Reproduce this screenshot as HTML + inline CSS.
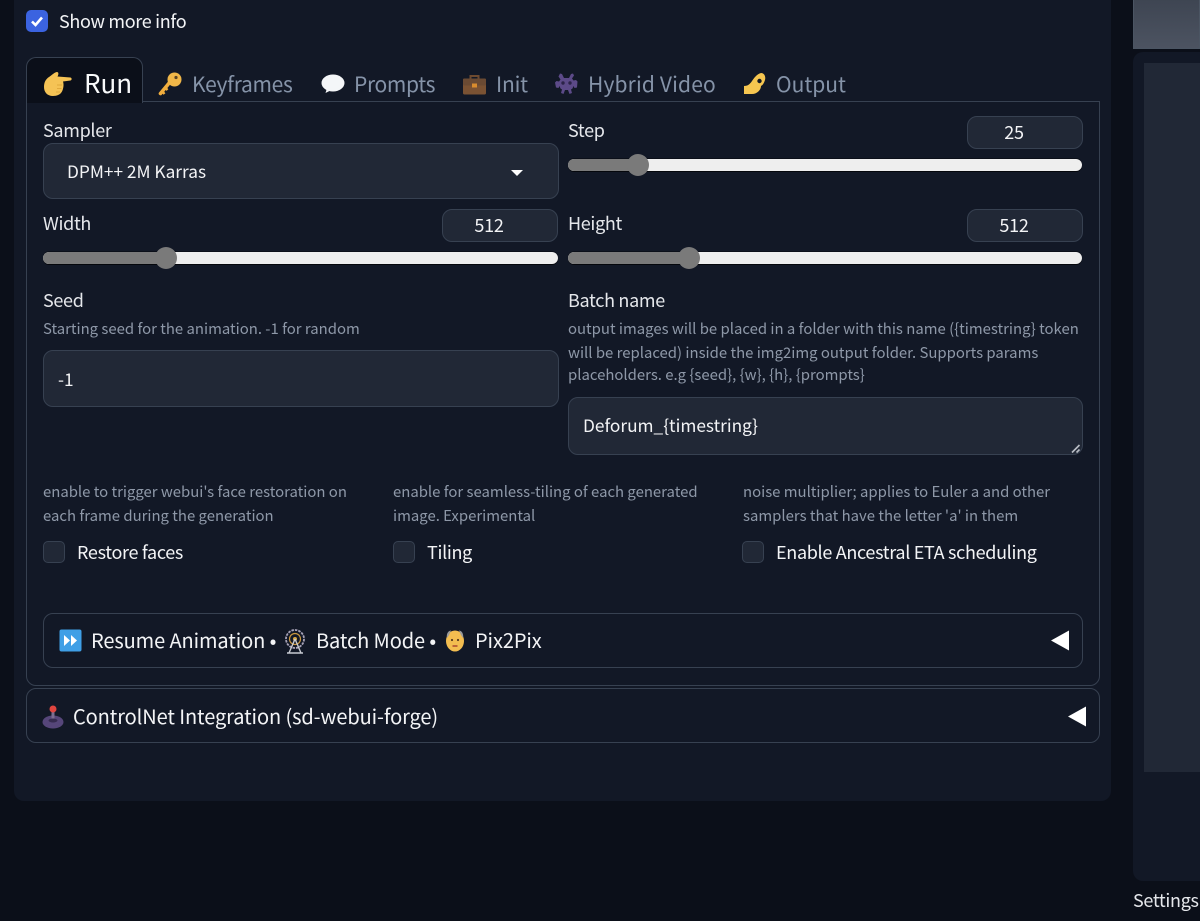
<!DOCTYPE html>
<html><head><meta charset="utf-8"><style>
*{box-sizing:border-box}
html,body{margin:0;padding:0;width:1200px;height:921px;overflow:hidden;background:#0b0f19}
body{position:relative;font-family:"Noto Sans CJK JP","Liberation Sans",sans-serif;color:#e5e7eb}
.a{position:absolute}
.t{position:absolute;white-space:nowrap;line-height:24px;font-size:18px;letter-spacing:-.32px;color:#f3f4f6}
.l{font-size:18px;color:#e5e7eb}
.i{font-size:14.9px;letter-spacing:0;color:#8e98a8;margin-top:1px}
.tab{font-size:21px;letter-spacing:0;color:#8593a8}
.m{font-size:17.3px;letter-spacing:0}
.h{font-size:20px;letter-spacing:-.1px}
.box{position:absolute;background:#212836;border:1px solid #374151;border-radius:10px}
.num{position:absolute;width:116px;height:33px;background:#212836;border:1px solid #374151;border-radius:10px;padding-right:22px;text-align:center;font-size:18px;line-height:30px;letter-spacing:-.2px;color:#f3f4f6}
.sl{position:absolute;height:12px;background:#eee;border-radius:6px;box-shadow:0 1px 0 #05070c,0 -1px 0 #0b0f19}
.sl b{position:absolute;left:0;top:0;height:12px;background:#7a7a7a;border-radius:6px 0 0 6px}
.sl i{position:absolute;top:-5px;width:22px;height:22px;border-radius:50%;background:#7a7a7a}
.cb{position:absolute;width:22px;height:22px;background:#212836;border:1px solid #374151;border-radius:5px}
svg{position:absolute;overflow:visible}
</style></head><body>
<div class="a" style="left:14px;top:-10px;width:1097px;height:811px;background:#121826;border-radius:10px"></div>

<div class="a" style="left:26px;top:10px;width:22px;height:22px;background:#3b63e0;border-radius:5px"></div>
<svg style="left:26px;top:10px" width="22" height="22"><path d="M6 11.500l3.500 3.500L16 7.500" fill="none" stroke="#fff" stroke-width="2.600"/></svg>
<div class="t" style="left:59px;top:9px">Show more info</div>

<!-- tabs -->
<div class="a" style="left:26px;top:101px;width:1074px;height:585px;border:1px solid #374151;border-radius:0 0 10px 10px"></div>
<div class="a" style="left:26px;top:57px;width:117px;height:46px;background:#0b0f19;border:1px solid #374151;border-bottom:none;border-radius:10px 10px 0 0"></div>
<svg style="left:43px;top:71px" width="29" height="26" viewBox="0 0 29 26"><path d="M1 16c0-5 2-8 5-10 3-2 6-5 8-5 1.500 0 2 2 .5 4.500l13 1c1.500.5 1.500 2.500 0 3L20 10.500c1 3 .5 7-1 10-1.500 3-5 4.500-9 4.500C4 25 1 21 1 16z" fill="#f5c355"/><path d="M14 14h5M14 17.500h4.500M13 21h4" stroke="#e0a83c" stroke-width="1"/></svg>
<div class="t" style="left:84px;top:70px;font-size:26px;line-height:26px;letter-spacing:0;color:#f9fafb">Run</div>

<svg style="left:159px;top:72px" width="23" height="24" viewBox="0 0 23 24"><path d="M1.500 21.500L11 10" stroke="#f0ad3d" stroke-width="3.600" stroke-linecap="round"/><path d="M3 19l2.500 3M6 15.500l2.500 2.500" stroke="#f0ad3d" stroke-width="2.500"/><circle cx="15.500" cy="7.500" r="7" fill="#f0b648"/><circle cx="17" cy="5.500" r="1.600" fill="#5b4325"/></svg>
<div class="t tab" style="left:192px;top:72px;letter-spacing:-.3px">Keyframes</div>

<svg style="left:321px;top:73px" width="24" height="22" viewBox="0 0 24 22"><ellipse cx="12" cy="10" rx="11.500" ry="8.500" fill="#f4f6f8"/><path d="M6 15l-1.500 5 6-3z" fill="#f4f6f8"/></svg>
<div class="t tab" style="left:354px;top:72px;letter-spacing:-.35px">Prompts</div>

<svg style="left:463px;top:74px" width="23" height="21" viewBox="0 0 23 21"><path d="M7.500 5V2h8v3" fill="none" stroke="#6d4a30" stroke-width="2"/><rect x="0" y="4.500" width="23" height="16" rx="1.500" fill="#7a5233"/><rect x="0" y="4.500" width="23" height="7" rx="1.500" fill="#6a4a33"/><rect x="9" y="9.500" width="5" height="4" fill="#d98c2e"/></svg>
<div class="t tab" style="left:496px;top:72px;letter-spacing:-.2px">Init</div>

<svg style="left:555px;top:73px" width="23" height="22" viewBox="0 0 23 22"><path d="M5 .5l2 .5 2 4h5l2-4 2-.5 1 2-2 3 1.500 2 2.500-.5 1.500 1.500-.5 6-2.500.5-1-2-1 2.500-1.500 1 1 3.500-2.500 1-1.500-4h-3l-1.500 4-2.500-1 1-3.500-1.500-1-1-2.500-1 2-2.500-.5L0 9.500 1.500 8 4 8.500l1.500-2-2-3z" fill="#5c4a88"/><circle cx="8" cy="10" r="1.700" fill="#2b2348"/><circle cx="15" cy="10" r="1.700" fill="#2b2348"/></svg>
<div class="t tab" style="left:588px;top:72px;letter-spacing:.15px">Hybrid Video</div>

<svg style="left:743px;top:72px" width="23" height="24" viewBox="0 0 23 24"><path d="M1 22V14c4 0 6-2 8-5 2-3 5-7 9-8 3 0 5 3 4 7-1 3-2 5-4 6 0 4-4 8-9 8z" fill="#f6c650"/><circle cx="16.500" cy="9" r="2.200" fill="#121826"/></svg>
<div class="t tab" style="left:776px;top:72px">Output</div>

<!-- row 1 -->
<div class="t l" style="left:43px;top:118px">Sampler</div>
<div class="box" style="left:43px;top:143px;width:516px;height:56px"></div>
<div class="t m" style="left:67px;top:159px;color:#f3f4f6">DPM++ 2M Karras</div>
<div class="a" style="left:511px;top:170px;width:0;height:0;border-left:6px solid transparent;border-right:6px solid transparent;border-top:6px solid #fff"></div>

<div class="t l" style="left:568px;top:118px">Step</div>
<div class="num" style="left:967px;top:116px">25</div>
<div class="sl" style="left:568px;top:159px;width:514px"><b style="width:70px"></b><i style="left:59px"></i></div>

<!-- row 2 -->
<div class="t l" style="left:43px;top:211px">Width</div>
<div class="num" style="left:442px;top:209px">512</div>
<div class="sl" style="left:43px;top:252px;width:515px"><b style="width:123px"></b><i style="left:112px"></i></div>
<div class="t l" style="left:568px;top:211px">Height</div>
<div class="num" style="left:967px;top:209px">512</div>
<div class="sl" style="left:568px;top:252px;width:514px"><b style="width:121px"></b><i style="left:110px"></i></div>

<!-- seed -->
<div class="t l" style="left:43px;top:288px">Seed</div>
<div class="t i" style="left:43px;top:316px">Starting seed for the animation. -1 for random</div>
<div class="box" style="left:43px;top:350px;width:516px;height:57px"></div>
<div class="t m" style="left:58px;top:367px">-1</div>

<!-- batch -->
<div class="t l" style="left:568px;top:288px">Batch name</div>
<div class="t i" style="left:568px;top:316px">output images will be placed in a folder with this name ({timestring} token</div>
<div class="t i" style="left:568px;top:340px">will be replaced) inside the img2img output folder. Supports params</div>
<div class="t i" style="left:568px;top:362px">placeholders. e.g {seed}, {w}, {h}, {prompts}</div>
<div class="box" style="left:568px;top:397px;width:515px;height:58px"></div>
<div class="t m" style="left:583px;top:413px">Deforum_{timestring}</div>
<svg style="left:1070px;top:443px" width="12" height="12"><path d="M2 9.500L9.500 2M6.500 9.500L9.500 6.500" stroke="#b8bcc4" stroke-width="1.600"/></svg>

<!-- checks -->
<div class="t i" style="left:43px;top:479px">enable to trigger webui's face restoration on</div>
<div class="t i" style="left:43px;top:503px">each frame during the generation</div>
<div class="cb" style="left:43px;top:541px"></div>
<div class="t" style="left:77px;top:540px">Restore faces</div>

<div class="t i" style="left:393px;top:479px">enable for seamless-tiling of each generated</div>
<div class="t i" style="left:393px;top:503px">image. Experimental</div>
<div class="cb" style="left:393px;top:541px"></div>
<div class="t" style="left:427px;top:540px">Tiling</div>

<div class="t i" style="left:743px;top:479px">noise multiplier; applies to Euler a and other</div>
<div class="t i" style="left:743px;top:503px">samplers that have the letter 'a' in them</div>
<div class="cb" style="left:742px;top:541px"></div>
<div class="t" style="left:776px;top:540px">Enable Ancestral ETA scheduling</div>

<!-- accordion 1 -->
<div class="a" style="left:43px;top:613px;width:1040px;height:55px;border:1px solid #374151;border-radius:10px"></div>
<svg style="left:59px;top:629px" width="23" height="23" viewBox="0 0 23 23"><rect x=".5" y=".5" width="22" height="22" rx="2" fill="#3f9fe6"/><path d="M5 6l6 5.500-6 5.500zM12 6l6 5.500-6 5.500z" fill="#fff"/></svg>
<div class="t h" style="left:91px;top:628px">Resume Animation •</div>
<svg style="left:284px;top:628px" width="22" height="26" viewBox="0 0 22 26" fill="none"><circle cx="11" cy="11" r="9" stroke="#a8a3b8" stroke-width="1.800" stroke-dasharray="2.500 1"/><circle cx="11" cy="11" r="5.500" stroke="#c9963e" stroke-width="1.200"/><circle cx="11" cy="11" r="2" fill="#d8a640"/><path d="M11 11L5 25M11 11l6 14M3 25h16" stroke="#c8cbd2" stroke-width="1.400"/></svg>
<div class="t h" style="left:316px;top:628px">Batch Mode •</div>
<svg style="left:444px;top:630px" width="22" height="22" viewBox="0 0 22 22"><ellipse cx="11" cy="11" rx="9" ry="10.500" fill="#f3bd50"/><path d="M3 8C2 3 5 .5 7 .5L5 5zM19 8c1-5-2-7.500-4-7.500L17 5z" fill="#9a9a9a"/><circle cx="8" cy="10" r="1.100" fill="#5a3b1c"/><circle cx="14" cy="10" r="1.100" fill="#5a3b1c"/><path d="M8.500 16h5" stroke="#a8452f" stroke-width="1.500"/></svg>
<div class="t h" style="left:475px;top:628px">Pix2Pix</div>
<svg style="left:1051px;top:630px" width="19" height="21"><path d="M0 10.500L18 0.500V20.500z" fill="#fff"/></svg>

<!-- accordion 2 -->
<div class="a" style="left:26px;top:688px;width:1074px;height:55px;border:1px solid #374151;border-radius:10px"></div>
<svg style="left:42px;top:705px" width="22" height="24" viewBox="0 0 22 24"><ellipse cx="11" cy="17" rx="10.500" ry="6.500" fill="#56467a"/><path d="M9.500 6h3v9h-3z" fill="#7c6d90"/><circle cx="11" cy="4" r="3.500" fill="#e0453f"/><ellipse cx="11" cy="15.500" rx="4.500" ry="2" fill="#362b50"/></svg>
<div class="t h" style="left:73px;top:704px">ControlNet Integration (sd-webui-forge)</div>
<svg style="left:1068px;top:706px" width="19" height="21"><path d="M0 10.500L18 0.500V20.500z" fill="#fff"/></svg>

<!-- right side -->
<div class="a" style="left:1133px;top:-5px;width:67px;height:54px;background:linear-gradient(#3d4451,#4c5361);border:1px solid #4b5563"></div>
<div class="a" style="left:1133px;top:52px;width:80px;height:829px;background:#121826;border-radius:10px"></div>
<div class="a" style="left:1144px;top:63px;width:56px;height:709px;background:#212836"></div>
<div class="t" style="left:1133px;top:888px;color:#e5e7eb">Settings</div>
</body></html>
